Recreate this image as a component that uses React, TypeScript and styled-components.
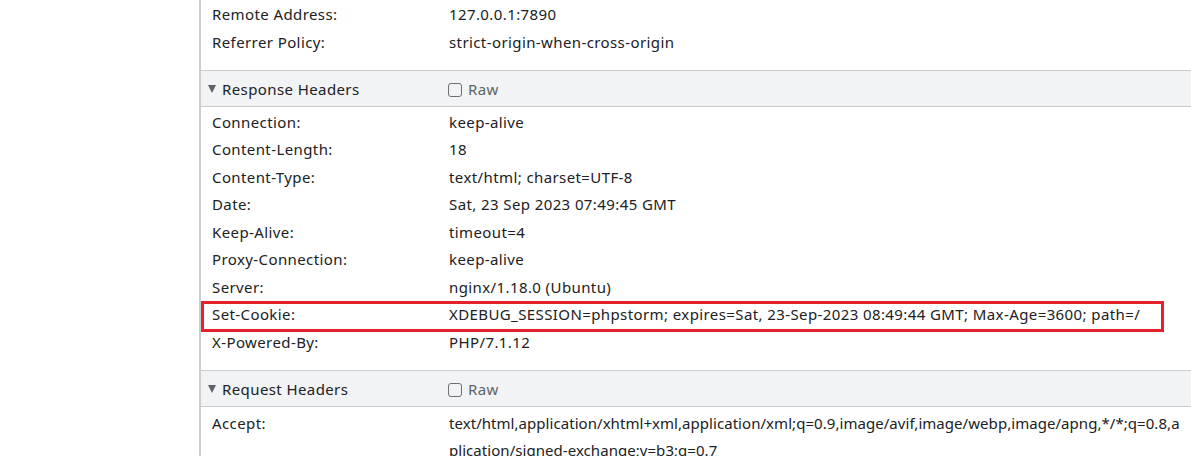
import React from "react";
import styled, { createGlobalStyle } from "styled-components";

const Global = createGlobalStyle`
  html, body { margin: 0; padding: 0; background: #fff; overflow: hidden; }
  body { font-family: "Noto Sans", "Open Sans", sans-serif; }
`;

const Page = styled.div`
  display: flex;
  width: 1191px;
  height: 456px;
  overflow: hidden;
`;

const Sidebar = styled.div`
  width: 199px;
  flex: none;
  border-right: 2px solid #cbcdd1;
`;

const Content = styled.div`
  flex: 1;
  min-width: 0;
  padding-top: 1px;
  letter-spacing: 0.4px;
`;

const Section = styled.section<{ $first?: boolean }>`
  border-top: ${(p) => (p.$first ? "none" : "1px solid #cbcdd1")};
`;

const Header = styled.div`
  display: grid;
  grid-template-columns: 240px 1fr;
  align-items: center;
  height: 35px;
  background: #f1f3f4;
  border-bottom: 1px solid #cbcdd1;
  padding-left: 7px;
  color: #202124;
  font-size: 15px;
`;

const HeaderTitle = styled.div`
  display: flex;
  align-items: center;
  gap: 6px;
  padding-top: 1px;
`;

const Triangle = styled.span`
  width: 0;
  height: 0;
  border-left: 4.5px solid transparent;
  border-right: 4.5px solid transparent;
  border-top: 8px solid #5f6368;
  margin-top: 1px;
`;

const RawToggle = styled.label`
  display: flex;
  align-items: center;
  gap: 6px;
  color: #5f6368;
  font-size: 15px;
  padding-top: 1px;
`;

const Box = styled.span`
  width: 12px;
  height: 12px;
  border: 1.25px solid #6b6e73;
  border-radius: 3px;
  margin-top: 2px;
`;

const Rows = styled.div<{ $padTop?: number }>`
  padding-top: ${(p) => p.$padTop ?? 0}px;
  padding-bottom: 13.5px;
`;

const Row = styled.div`
  position: relative;
  display: grid;
  grid-template-columns: 237px 1fr;
  padding-left: 11px;
  font-size: 15px;
  line-height: 27.5px;
  color: #202124;
`;

const Label = styled.div`
  white-space: nowrap;
`;

const Value = styled.div<{ $tight?: boolean }>`
  white-space: nowrap;
  overflow: hidden;
  letter-spacing: ${(p) => (p.$tight ? "0.05px" : "inherit")};
`;

const Highlight = styled.div`
  position: absolute;
  left: 0;
  top: 0;
  width: 963px;
  height: 31px;
  box-sizing: border-box;
  border: 3px solid #e5222b;
  pointer-events: none;
`;

type Item = [string, string];

const general: Item[] = [
  ["Remote Address:", "127.0.0.1:7890"],
  ["Referrer Policy:", "strict-origin-when-cross-origin"],
];

const response: Item[] = [
  ["Connection:", "keep-alive"],
  ["Content-Length:", "18"],
  ["Content-Type:", "text/html; charset=UTF-8"],
  ["Date:", "Sat, 23 Sep 2023 07:49:45 GMT"],
  ["Keep-Alive:", "timeout=4"],
  ["Proxy-Connection:", "keep-alive"],
  ["Server:", "nginx/1.18.0 (Ubuntu)"],
  ["Set-Cookie:", "XDEBUG_SESSION=phpstorm; expires=Sat, 23-Sep-2023 08:49:44 GMT; Max-Age=3600; path=/"],
  ["X-Powered-By:", "PHP/7.1.12"],
];

const SectionHeader = ({ title }: { title: string }) => (
  <Header>
    <HeaderTitle>
      <Triangle />
      {title}
    </HeaderTitle>
    <RawToggle>
      <Box />
      Raw
    </RawToggle>
  </Header>
);

export default function App() {
  return (
    <>
      <Global />
      <Page>
        <Sidebar />
        <Content>
          <Section $first>
            <Rows>
              {general.map(([k, v]) => (
                <Row key={k}>
                  <Label>{k}</Label>
                  <Value>{v}</Value>
                </Row>
              ))}
            </Rows>
          </Section>
          <Section>
            <SectionHeader title="Response Headers" />
            <Rows $padTop={2}>
              {response.map(([k, v]) => (
                <Row key={k}>
                  {k === "Set-Cookie:" && <Highlight />}
                  <Label>{k}</Label>
                  <Value>{v}</Value>
                </Row>
              ))}
            </Rows>
          </Section>
          <Section>
            <SectionHeader title="Request Headers" />
            <Rows $padTop={3}>
              <Row>
                <Label>Accept:</Label>
                <Value $tight>
                  text/html,application/xhtml+xml,application/xml;q=0.9,image/avif,image/webp,image/apng,*/*;q=0.8,a
                  <br />
                  plication/signed-exchange;v=b3;q=0.7
                </Value>
              </Row>
            </Rows>
          </Section>
        </Content>
      </Page>
    </>
  );
}
